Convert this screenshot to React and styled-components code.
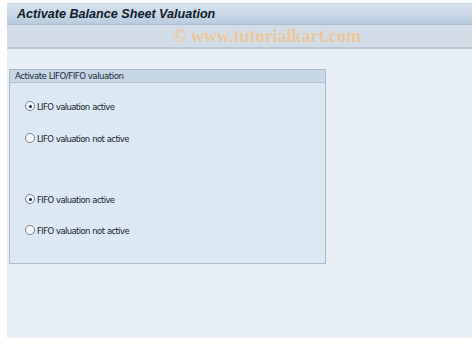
import React from 'react'
import styled, {createGlobalStyle} from 'styled-components'

const Global = createGlobalStyle`
    html, body {
        margin: 0;
        background: #ffffff;
    }
    body {
        padding: 3px 2px 5px 7px;
        font-family: 'DejaVu Sans Condensed', 'DejaVu Sans', sans-serif;
    }
`

const Screen = styled.div`
    width: 465px;
    height: 335px;
    display: flex;
    flex-direction: column;
    background: #e9eff6;
`

const TitleBar = styled.div`
    height: 20px;
    display: flex;
    align-items: center;
    padding-left: 10px;
    background: linear-gradient(#d9e3ee, #b9cbe0);
    border-top: 1px solid #c9d5e2;
    border-bottom: 1px solid #a9bdd3;
    h1 {
        margin: 0;
        font-family: 'Liberation Sans', Arial, sans-serif;
        font-size: 12.6px;
        font-weight: bold;
        font-style: italic;
        color: #0d1a2a;
    }
`

const Toolbar = styled.div`
    height: 22px;
    display: flex;
    align-items: center;
    justify-content: center;
    padding-left: 55px;
    background: #d2dde8;
    border-bottom: 2px solid #b9c7d6;
    span {
        font-family: 'Liberation Serif', 'Times New Roman', serif;
        font-size: 18px;
        font-weight: bold;
        color: #edc79a;
    }
`

const Content = styled.div`
    flex: 1;
    padding: 20px 0 0 2px;
`

const GroupBox = styled.fieldset`
    margin: 0;
    padding: 0;
    width: 317px;
    height: 195px;
    box-sizing: border-box;
    border: 1px solid #a8b9ca;
    background: #dce8f3;
    display: flex;
    flex-direction: column;
`

const GroupHeader = styled.div`
    height: 12px;
    line-height: 12px;
    padding-left: 5px;
    font-size: 9.5px;
    letter-spacing: -0.45px;
    color: #1a2838;
    background: #c6d7e7;
    border-bottom: 1px solid #aebfd0;
`

const Options = styled.div`
    display: flex;
    flex-direction: column;
    padding: 16px 0 0 15px;
`

const Option = styled.label`
    display: flex;
    align-items: center;
    height: 14px;
    margin-bottom: ${p => p.gap}px;
    font-size: 9.4px;
    letter-spacing: -0.6px;
    word-spacing: 0.5px;
    color: #121d2a;
`

const Radio = styled.span`
    width: 8px;
    height: 8px;
    border-radius: 50%;
    border: 1px solid #6f7f90;
    background: #fafcfe;
    margin-right: 2px;
    display: flex;
    align-items: center;
    justify-content: center;
    &::after {
        content: '';
        width: 3px;
        height: 3px;
        border-radius: 50%;
        background: ${p => (p.checked ? '#1c2836' : 'transparent')};
    }
`

const options = [
    {label: 'LIFO valuation active', checked: true, gap: 18},
    {label: 'LIFO valuation not active', checked: false, gap: 47},
    {label: 'FIFO valuation active', checked: true, gap: 17},
    {label: 'FIFO valuation not active', checked: false, gap: 0},
]

export default function App() {
    return (
        <>
            <Global />
            <Screen>
                <TitleBar>
                    <h1>Activate Balance Sheet Valuation</h1>
                </TitleBar>
                <Toolbar>
                    <span>© www.tutorialkart.com</span>
                </Toolbar>
                <Content>
                    <GroupBox>
                        <GroupHeader>Activate LIFO/FIFO valuation</GroupHeader>
                        <Options>
                            {options.map(o => (
                                <Option key={o.label} gap={o.gap}>
                                    <Radio checked={o.checked} />
                                    {o.label}
                                </Option>
                            ))}
                        </Options>
                    </GroupBox>
                </Content>
            </Screen>
        </>
    )
}
